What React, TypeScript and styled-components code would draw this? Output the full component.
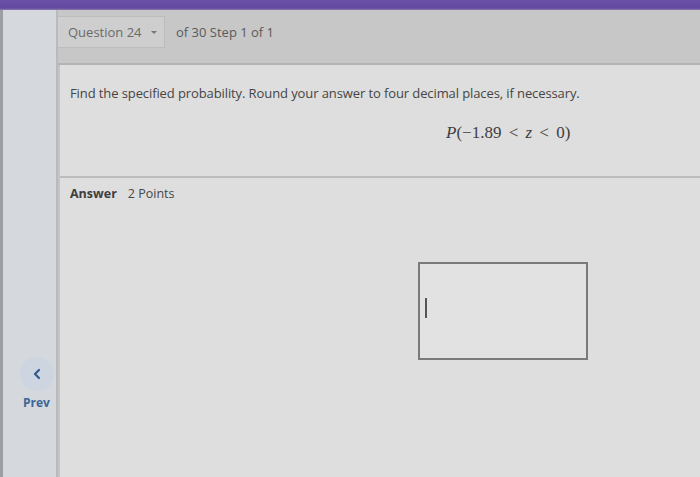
import React from "react";
import styled, { createGlobalStyle } from "styled-components";

const Global = createGlobalStyle`
  html, body { margin: 0; padding: 0; }
  body { width: 700px; height: 477px; overflow: hidden; background: #d9d9d9; font-family: "Open Sans", "Noto Sans", sans-serif; }
`;

const Page = styled.div`
  width: 700px;
  height: 477px;
  display: flex;
  flex-direction: column;
`;

const TopBar = styled.div`
  height: 10px;
  background: linear-gradient(180deg, #6c51a8 0%, #6449a0 80%, #8a7bb0 100%);
  flex: none;
`;

const Body = styled.div`
  flex: 1;
  display: flex;
  min-height: 0;
`;

const Sidebar = styled.div`
  width: 58px;
  flex: none;
  background: #d5d8dd;
  border-left: 3px solid #9c9ea3;
  border-right: 2px solid #b9babd;
  display: flex;
  flex-direction: column;
  align-items: center;
  justify-content: flex-end;
  padding-bottom: 66px;
  box-sizing: border-box;
`;

const PrevButton = styled.div`
  display: flex;
  flex-direction: column;
  align-items: center;
  gap: 3px;
  margin-left: 14px;
`;

const PrevCircle = styled.div`
  width: 34px;
  height: 34px;
  border-radius: 50%;
  background: #ccd5e0;
  display: flex;
  align-items: center;
  justify-content: center;
`;

const PrevLabel = styled.div`
  font-size: 12px;
  font-weight: 700;
  color: #3b6696;
`;

const Main = styled.div`
  flex: 1;
  display: flex;
  flex-direction: column;
  min-width: 0;
`;

const Header = styled.div`
  height: 55px;
  flex: none;
  background: #c7c7c7;
  border-bottom: 2px solid #b3b3b3;
  display: flex;
  align-items: flex-start;
  padding-top: 6px;
  box-sizing: border-box;
`;

const Dropdown = styled.div`
  width: 107px;
  height: 32px;
  box-sizing: border-box;
  background: #cecece;
  border: 1px solid #bdbdbd;
  border-left: none;
  display: flex;
  align-items: center;
  padding-left: 10px;
  gap: 9px;
  font-size: 13px;
  color: #6a6a6a;
`;

const Caret = styled.span`
  width: 0;
  height: 0;
  border-left: 3px solid transparent;
  border-right: 3px solid transparent;
  border-top: 3px solid #777;
  margin-top: 1px;
`;

const StepText = styled.div`
  height: 32px;
  display: flex;
  align-items: center;
  margin-left: 11px;
  font-size: 13px;
  color: #5a5a5a;
`;

const Panel = styled.div`
  flex: 1;
  background: #dedede;
  border-left: 2px solid #c4c4c4;
  display: flex;
  flex-direction: column;
`;

const Question = styled.div`
  height: 113px;
  box-sizing: border-box;
  border-bottom: 2px solid #bcbcbc;
  padding: 19px 0 0 10px;
  display: flex;
  flex-direction: column;
`;

const Prompt = styled.div`
  font-size: 13px;
  color: #454545;
  letter-spacing: -0.1px;
`;

const Formula = styled.div`
  align-self: flex-start;
  margin-left: 376px;
  margin-top: 21px;
  font-family: "Liberation Serif", "DejaVu Serif", serif;
  font-size: 17px;
  color: #3e3e3e;
  white-space: pre;
`;

const Var = styled.i`
  font-style: italic;
`;

const Op = styled.span`
  margin: 0 3px;
`;

const Answer = styled.div`
  padding: 7px 0 0 10px;
  display: flex;
  flex-direction: column;
`;

const AnswerHead = styled.div`
  display: flex;
  align-items: baseline;
  gap: 11px;
  font-size: 12.5px;
  color: #474747;
`;

const Bold = styled.span`
  font-weight: 700;
  color: #3d3d3d;
`;

const InputBox = styled.div`
  margin-top: 60px;
  margin-left: 348px;
  width: 170px;
  height: 98px;
  box-sizing: border-box;
  border: 2px solid #7a7a7a;
  background: #e2e2e2;
  display: flex;
  align-items: center;
  padding-left: 5px;
`;

const Cursor = styled.div`
  width: 1.5px;
  height: 20px;
  background: #555;
  margin-top: -6px;
`;

export default function App() {
  return (
    <>
      <Global />
      <Page>
        <TopBar />
        <Body>
          <Sidebar>
            <PrevButton>
              <PrevCircle>
                <svg width="10" height="12" viewBox="0 0 10 12">
                  <path d="M7 2 L3 6 L7 10" fill="none" stroke="#2f5a8c" strokeWidth="2.2" strokeLinecap="round" strokeLinejoin="round" />
                </svg>
              </PrevCircle>
              <PrevLabel>Prev</PrevLabel>
            </PrevButton>
          </Sidebar>
          <Main>
            <Header>
              <Dropdown>
                Question 24 <Caret />
              </Dropdown>
              <StepText>of 30 Step 1 of 1</StepText>
            </Header>
            <Panel>
              <Question>
                <Prompt>Find the specified probability. Round your answer to four decimal places, if necessary.</Prompt>
                <Formula>
                  <Var>P</Var>(−1.89<Op> &lt; </Op><Var>z</Var><Op> &lt; </Op>0)
                </Formula>
              </Question>
              <Answer>
                <AnswerHead>
                  <Bold>Answer</Bold>
                  <span>2 Points</span>
                </AnswerHead>
                <InputBox>
                  <Cursor />
                </InputBox>
              </Answer>
            </Panel>
          </Main>
        </Body>
      </Page>
    </>
  );
}
